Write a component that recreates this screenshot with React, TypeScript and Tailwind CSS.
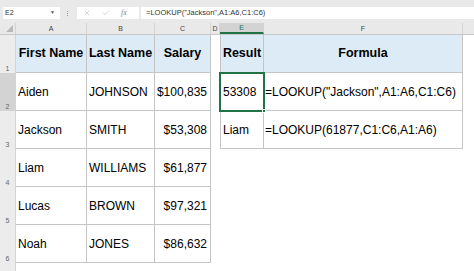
import { Check, X } from "lucide-react";

const COLS = [
  { key: "A", w: "w-[71px]" },
  { key: "B", w: "w-[68px]" },
  { key: "C", w: "w-[56px]" },
  { key: "D", w: "w-[9px]" },
  { key: "E", w: "w-[44px]" },
  { key: "F", w: "w-[199px]" },
];

const PEOPLE = [
  ["Aiden", "JOHNSON", "$100,835"],
  ["Jackson", "SMITH", "$53,308"],
  ["Liam", "WILLIAMS", "$61,877"],
  ["Lucas", "BROWN", "$97,321"],
  ["Noah", "JONES", "$86,632"],
];

const RESULTS = [
  ["53308", '=LOOKUP("Jackson",A1:A6,C1:C6)'],
  ["Liam", "=LOOKUP(61877,C1:C6,A1:A6)"],
];

const line = "border-[#c4c4c4]";

function RowHead({ n, active }: { n: number; active?: boolean }) {
  return (
    <div
      className={`flex h-full w-[16px] shrink-0 items-end justify-center border-r border-[#d4d4d4] pb-[1px] text-[7px] leading-none text-[#666] ${
        active ? "bg-[#d3d3d3]" : "bg-[#ececec]"
      }`}
    >
      {n}
    </div>
  );
}

export default function App() {
  return (
    <div className="relative h-[271px] w-[474px] overflow-hidden bg-white font-['Liberation_Sans',Arial,sans-serif] text-black">
      {/* formula bar */}
      <div className="flex h-[23px] items-start gap-0 bg-[#e9e9e9] pt-[7px]">
        <div className="ml-[3px] flex h-[12px] w-[57px] items-center justify-between bg-white px-[2px] text-[7px] text-[#333]">
          <span>E2</span>
          <span className="mr-[3px] text-[5px] text-[#555]">▼</span>
        </div>
        <div className="ml-[7px] flex h-[12px] flex-col items-center justify-center gap-[1px]">
          <span className="h-[1px] w-[1px] bg-[#999]" />
          <span className="h-[1px] w-[1px] bg-[#999]" />
          <span className="h-[1px] w-[1px] bg-[#999]" />
        </div>
        <div className="ml-[9px] flex h-[12px] w-[62px] items-center gap-[11px] bg-white pl-[6px] text-[#c2c2c2]">
          <X className="h-[8px] w-[8px]" strokeWidth={2} />
          <Check className="h-[8px] w-[8px]" strokeWidth={2} />
          <span className="font-['Liberation_Serif',serif] text-[8px] italic text-[#888]">
            fx
          </span>
        </div>
        <div className="ml-[2px] flex h-[12px] flex-1 items-center bg-white pl-[5px] text-[7.5px] text-[#333]">
          =LOOKUP("Jackson",A1:A6,C1:C6)
        </div>
      </div>

      {/* column headers */}
      <div className="flex h-[12px] border-b border-[#c8c8c8] bg-[#e9e9e9] text-[7px] leading-none text-[#444]">
        <div className="relative w-[16px] shrink-0 border-r border-[#d4d4d4]">
          <div className="absolute bottom-[2px] right-[2px] h-0 w-0 border-b-[7px] border-l-[7px] border-b-[#b8b8b8] border-l-transparent" />
        </div>
        {COLS.map((c) => (
          <div
            key={c.key}
            className={`${c.w} flex shrink-0 items-center justify-center border-r border-[#d4d4d4] ${
              c.key === "E" ? "border-b-2 border-b-[#217346] bg-[#d3d3d3] text-[#217346]" : ""
            }`}
          >
            {c.key}
          </div>
        ))}
        <div className="flex-1" />
      </div>

      {/* row 1 */}
      <div className="flex h-[38px]">
        <RowHead n={1} />
        <div className={`flex w-[71px] items-center justify-center border-r border-b ${line} bg-[#ddebf7] text-[12.5px] font-bold`}>
          First Name
        </div>
        <div className={`flex w-[68px] items-center justify-center border-r border-b ${line} bg-[#ddebf7] text-[12.5px] font-bold`}>
          Last Name
        </div>
        <div className={`flex w-[56px] items-center justify-center border-r border-b ${line} bg-[#ddebf7] text-[12.5px] font-bold`}>
          Salary
        </div>
        <div className="w-[9px]" />
        <div className={`flex w-[44px] items-center justify-center border-x border-b ${line} bg-[#ddebf7] text-[12.5px] font-bold`}>
          Result
        </div>
        <div className={`flex w-[199px] items-center justify-center border-r border-b ${line} bg-[#ddebf7] text-[12.5px] font-bold`}>
          Formula
        </div>
      </div>

      {/* rows 2-6 */}
      {PEOPLE.map((p, i) => {
        const r = RESULTS[i];
        return (
          <div key={p[0]} className="flex h-[38px] text-[12px]">
            <RowHead n={i + 2} active={i === 0} />
            <div className={`flex w-[71px] items-center border-r border-b ${line} pl-[2px]`}>{p[0]}</div>
            <div className={`flex w-[68px] items-center border-r border-b ${line} pl-[2px]`}>{p[1]}</div>
            <div className={`flex w-[56px] items-center justify-end border-r border-b ${line} pr-[3px]`}>{p[2]}</div>
            <div className="w-[9px]" />
            {r && (
              <>
                <div className={`flex w-[44px] items-center border-x border-b ${line} pl-[2px]`}>{r[0]}</div>
                <div className={`flex w-[199px] items-center border-r border-b ${line} pl-[1px]`}>{r[1]}</div>
              </>
            )}
          </div>
        );
      })}

      {/* row 7 */}
      <div className="flex h-[20px]">
        <RowHead n={7} />
      </div>

      {/* selected cell E2 */}
      <div className="absolute left-[219px] top-[72px] h-[40px] w-[46px] border-2 border-[#217346]">
        <div className="absolute -bottom-[3px] -right-[3px] h-[4px] w-[4px] border border-white bg-[#217346]" />
      </div>
    </div>
  );
}
